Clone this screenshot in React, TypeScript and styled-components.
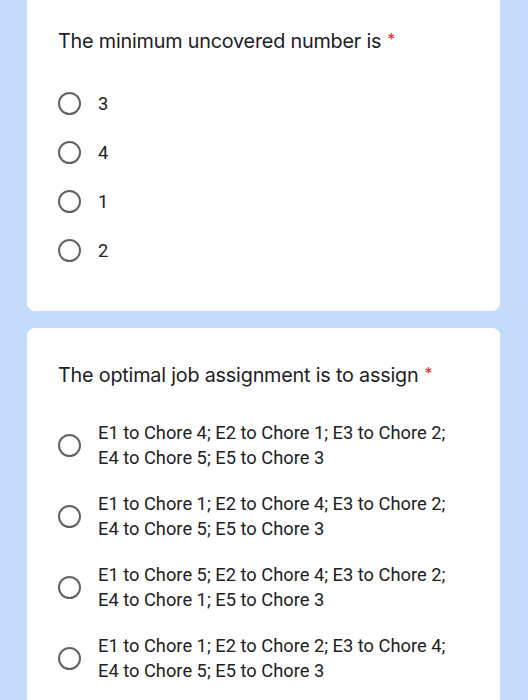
import React from "react";
import styled, { createGlobalStyle } from "styled-components";

const Global = createGlobalStyle`
  html, body { margin: 0; padding: 0; background: #c4dcfa; }
  body { overflow: hidden; }
`;

const Page = styled.div`
  display: flex;
  flex-direction: column;
  gap: 17px;
  padding: 0 28px 0 27px;
  height: 700px;
  overflow: hidden;
`;

const Card = styled.section<{ $first?: boolean }>`
  background: #ffffff;
  border-radius: 8px;
  margin-top: ${(p) => (p.$first ? "-10px" : "0")};
  padding: ${(p) => (p.$first ? "37px 31px 48px" : "33px 31px 40px")};
  flex-shrink: 0;
`;

const Title = styled.div<{ $gap: number }>`
  font-family: Inter, "Open Sans", sans-serif;
  font-size: 19.8px;
  color: #202124;
  letter-spacing: -0.2px;
  line-height: 24px;
  margin-bottom: ${(p) => p.$gap}px;
`;

const Star = styled.span`
  color: #d93025;
  margin-left: 6px;
  font-size: 16px;
  vertical-align: 3px;
`;

const Options = styled.div<{ $gap: number }>`
  display: flex;
  flex-direction: column;
  gap: ${(p) => p.$gap}px;
`;

const Option = styled.label`
  display: flex;
  align-items: center;
  gap: 17px;
  font-family: Roboto, "Liberation Sans", sans-serif;
  font-size: 18.3px;
  line-height: 25px;
  color: #202124;
`;

const Radio = styled.span`
  flex-shrink: 0;
  width: 19px;
  height: 19px;
  border: 2.4px solid #5f6368;
  border-radius: 50%;
`;

const Text = styled.span``;

const q1 = ["3", "4", "1", "2"];
const q2 = [
  ["E1 to Chore 4; E2 to Chore 1; E3 to Chore 2;", "E4 to Chore 5; E5 to Chore 3"],
  ["E1 to Chore 1; E2 to Chore 4; E3 to Chore 2;", "E4 to Chore 5; E5 to Chore 3"],
  ["E1 to Chore 5; E2 to Chore 4; E3 to Chore 2;", "E4 to Chore 1; E5 to Chore 3"],
  ["E1 to Chore 1; E2 to Chore 2; E3 to Chore 4;", "E4 to Chore 5; E5 to Chore 3"],
];

export default function App() {
  return (
    <>
      <Global />
      <Page>
        <Card $first>
          <Title $gap={38}>
            The minimum uncovered number is<Star>*</Star>
          </Title>
          <Options $gap={24}>
            {q1.map((o) => (
              <Option key={o}>
                <Radio />
                <Text>{o}</Text>
              </Option>
            ))}
          </Options>
        </Card>
        <Card>
          <Title $gap={33}>
            The optimal job assignment is to assign<Star>*</Star>
          </Title>
          <Options $gap={21}>
            {q2.map((o, i) => (
              <Option key={i}>
                <Radio />
                <Text>
                  {o[0]}
                  <br />
                  {o[1]}
                </Text>
              </Option>
            ))}
          </Options>
        </Card>
      </Page>
    </>
  );
}
